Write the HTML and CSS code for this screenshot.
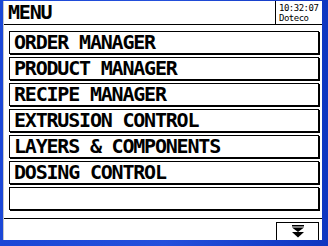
FILE: index.html
```html
<!DOCTYPE html>
<html>
<head>
<meta charset="utf-8">
<link rel="stylesheet" href="styles.css">
</head>
<body>
<div class="window">
  <div class="header">
    <div class="title">MENU</div>
    <div class="clock">
      <div>10:32:07</div>
      <div>Doteco</div>
    </div>
  </div>
  <div class="menu">
    <div class="item">ORDER MANAGER</div>
    <div class="item">PRODUCT MANAGER</div>
    <div class="item">RECIPE MANAGER</div>
    <div class="item">EXTRUSION CONTROL</div>
    <div class="item">LAYERS &amp; COMPONENTS</div>
    <div class="item">DOSING CONTROL</div>
    <div class="item"></div>
  </div>
  <div class="footer">
    <div class="down">
      <svg width="14" height="13" viewBox="0 0 14 13">
        <rect x="1" y="0" width="12" height="1.5" fill="#000"/>
        <polygon points="1,2.5 13,2.5 7,7" fill="#000"/>
        <polygon points="1,7 13,7 7,12.5" fill="#000"/>
      </svg>
    </div>
  </div>
</div>
</body>
</html>
```

FILE: styles.css
```css
html, body {
  margin: 0;
  padding: 0;
}
body {
  width: 328px;
  height: 246px;
  background: linear-gradient(to right, #1b47d6 0, #2450dc 50%, #0f36c0 100%);
  overflow: hidden;
}
.window {
  margin: 1px 6px 0 3px;
  height: 239px;
  background: #fff;
  display: flex;
  flex-direction: column;
  border-left: 1px solid #c8c8c8;
  box-sizing: border-box;
}
.header {
  height: 24px;
  border-bottom: 1px solid #000;
  display: flex;
  box-sizing: border-box;
}
.title {
  font-family: "DejaVu Sans Mono", monospace;
  font-weight: bold;
  font-size: 20px;
  letter-spacing: -1.2px;
  line-height: 23px;
  padding-left: 4px;
}
.clock {
  margin-left: auto;
  width: 47px;
  border-left: 1px solid #000;
  font-family: "DejaVu Sans Mono", monospace;
  font-size: 9px;
  letter-spacing: -0.5px;
  line-height: 10px;
  padding: 2px 0 0 3px;
  box-sizing: border-box;
}
.menu {
  display: flex;
  flex-direction: column;
  gap: 3px;
  padding: 6px 3px 0 5px;
}
.item {
  height: 23px;
  box-sizing: border-box;
  border: 1px solid #000;
  box-shadow: 1px 1px 0 #000;
  font-family: "DejaVu Sans Mono", monospace;
  font-weight: bold;
  font-size: 20px;
  letter-spacing: -1.2px;
  line-height: 21px;
  padding-left: 4px;
  white-space: nowrap;
}
.footer {
  margin-top: auto;
  height: 22px;
  border-top: 1px solid #000;
  display: flex;
  justify-content: flex-end;
  padding: 3px 3px 0 0;
  box-sizing: border-box;
}
.down {
  width: 43px;
  height: 18px;
  border: 1px solid #000;
  border-bottom: none;
  box-sizing: border-box;
  display: flex;
  align-items: center;
  justify-content: center;
}
.down svg {
  display: block;
}
```
